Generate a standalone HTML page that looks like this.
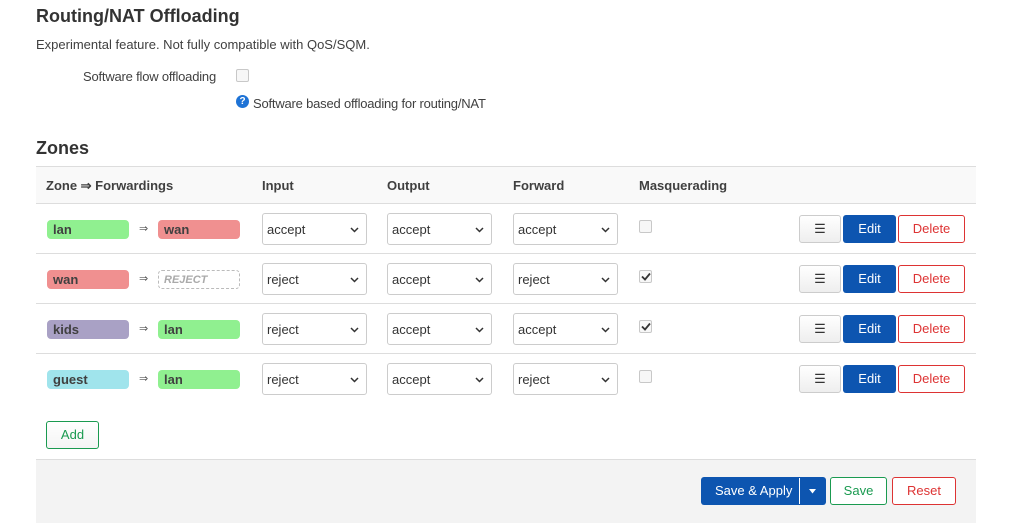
<!DOCTYPE html>
<html><head><meta charset="utf-8"><style>
*{box-sizing:border-box;margin:0;padding:0}
body{width:1025px;height:527px;background:#fff;font-family:"Liberation Sans",Arial,sans-serif;color:#404040;position:relative;overflow:hidden;font-size:13px}
.a{position:absolute}
h2{position:absolute;font-size:18px;font-weight:bold;color:#333}
.cb{position:absolute;width:13px;height:13px;border:1px solid #c8c8c8;border-radius:2px;background:#f7f7f7}
.cb svg{position:absolute;left:1px;top:1px}
.badge{position:absolute;width:82px;height:19px;border-radius:4px;font-weight:bold;font-size:13px;color:#404040;padding-left:6px;line-height:19px}
.arr{position:absolute;font-size:11px;color:#555}
.sel{position:absolute;width:105px;height:32px;border:1px solid #ccc;border-radius:3px;background:#fff;padding-left:4px;line-height:31px;font-size:13px;color:#333}
.sel svg{position:absolute;right:7px;top:13px}
.btn{position:absolute;height:28px;border-radius:3px;text-align:center;line-height:26px;font-size:13px}
.rowline{position:absolute;left:36px;width:940px;height:1px;background:#ddd}
</style></head><body>
<h2 style="left:36px;top:6px">Routing/NAT Offloading</h2>
<div class="a" style="left:36px;top:37px">Experimental feature. Not fully compatible with QoS/SQM.</div>
<div class="a" style="left:82px;top:69px;width:134px;text-align:right;letter-spacing:-0.2px">Software flow offloading</div>
<div class="cb" style="left:236px;top:69px"></div>
<div class="a" style="left:236px;top:95px;width:13px;height:13px;border-radius:50%;background:#1e73d6;color:#fff;font-size:10px;font-weight:bold;text-align:center;line-height:13px">?</div>
<div class="a" style="left:253px;top:96px;letter-spacing:-0.2px">Software based offloading for routing/NAT</div>

<h2 style="left:36px;top:138px">Zones</h2>
<div class="a" style="left:36px;top:166px;width:940px;height:38px;background:#f9f9f9;border-top:1px solid #ddd;border-bottom:1px solid #ddd"></div>
<div class="a" style="left:46px;top:178px;font-weight:bold">Zone ⇒ Forwardings</div>
<div class="a" style="left:262px;top:178px;font-weight:bold">Input</div>
<div class="a" style="left:387px;top:178px;font-weight:bold">Output</div>
<div class="a" style="left:513px;top:178px;font-weight:bold">Forward</div>
<div class="a" style="left:639px;top:178px;font-weight:bold">Masquerading</div>
<div class="rowline" style="top:253px"></div>
<div class="rowline" style="top:303px"></div>
<div class="rowline" style="top:353px"></div>

<div class="badge" style="left:47px;top:220px;background:#90f090">lan</div>
<div class="arr" style="left:139px;top:222px">⇒</div>
<div class="badge" style="left:158px;top:220px;background:#f09090">wan</div>

<div class="badge" style="left:47px;top:270px;background:#f09090">wan</div>
<div class="arr" style="left:139px;top:272px">⇒</div>
<div class="badge" style="left:158px;top:270px;border:1px dashed #bbb;color:#aaa;font-style:italic;font-size:11px;padding-left:5px;line-height:18px">REJECT</div>

<div class="badge" style="left:47px;top:320px;background:#a9a1c5">kids</div>
<div class="arr" style="left:139px;top:322px">⇒</div>
<div class="badge" style="left:158px;top:320px;background:#90f090">lan</div>

<div class="badge" style="left:47px;top:370px;background:#a0e4ec">guest</div>
<div class="arr" style="left:139px;top:372px">⇒</div>
<div class="badge" style="left:158px;top:370px;background:#90f090">lan</div>

<div class="sel" style="left:262px;top:213px">accept<svg width="9" height="6"><path d="M1 1l3.5 3.5L8 1" stroke="#333" stroke-width="1.5" fill="none"/></svg></div>
<div class="sel" style="left:387px;top:213px">accept<svg width="9" height="6"><path d="M1 1l3.5 3.5L8 1" stroke="#333" stroke-width="1.5" fill="none"/></svg></div>
<div class="sel" style="left:513px;top:213px">accept<svg width="9" height="6"><path d="M1 1l3.5 3.5L8 1" stroke="#333" stroke-width="1.5" fill="none"/></svg></div>

<div class="sel" style="left:262px;top:263px">reject<svg width="9" height="6"><path d="M1 1l3.5 3.5L8 1" stroke="#333" stroke-width="1.5" fill="none"/></svg></div>
<div class="sel" style="left:387px;top:263px">accept<svg width="9" height="6"><path d="M1 1l3.5 3.5L8 1" stroke="#333" stroke-width="1.5" fill="none"/></svg></div>
<div class="sel" style="left:513px;top:263px">reject<svg width="9" height="6"><path d="M1 1l3.5 3.5L8 1" stroke="#333" stroke-width="1.5" fill="none"/></svg></div>

<div class="sel" style="left:262px;top:313px">reject<svg width="9" height="6"><path d="M1 1l3.5 3.5L8 1" stroke="#333" stroke-width="1.5" fill="none"/></svg></div>
<div class="sel" style="left:387px;top:313px">accept<svg width="9" height="6"><path d="M1 1l3.5 3.5L8 1" stroke="#333" stroke-width="1.5" fill="none"/></svg></div>
<div class="sel" style="left:513px;top:313px">accept<svg width="9" height="6"><path d="M1 1l3.5 3.5L8 1" stroke="#333" stroke-width="1.5" fill="none"/></svg></div>

<div class="sel" style="left:262px;top:363px">reject<svg width="9" height="6"><path d="M1 1l3.5 3.5L8 1" stroke="#333" stroke-width="1.5" fill="none"/></svg></div>
<div class="sel" style="left:387px;top:363px">accept<svg width="9" height="6"><path d="M1 1l3.5 3.5L8 1" stroke="#333" stroke-width="1.5" fill="none"/></svg></div>
<div class="sel" style="left:513px;top:363px">reject<svg width="9" height="6"><path d="M1 1l3.5 3.5L8 1" stroke="#333" stroke-width="1.5" fill="none"/></svg></div>

<div class="cb" style="left:639px;top:220px"></div>
<div class="cb" style="left:639px;top:270px"><svg width="10" height="9"><path d="M1 4.5l3 3L9 1.5" stroke="#333" stroke-width="1.8" fill="none"/></svg></div>
<div class="cb" style="left:639px;top:320px"><svg width="10" height="9"><path d="M1 4.5l3 3L9 1.5" stroke="#333" stroke-width="1.8" fill="none"/></svg></div>
<div class="cb" style="left:639px;top:370px"></div>

<div class="btn" style="left:799px;top:215px;width:42px;border:1px solid #ccc;background:linear-gradient(#fff,#eee);color:#333">☰</div>
<div class="btn" style="left:843px;top:215px;width:53px;background:#0d55b0;color:#fff;line-height:28px">Edit</div>
<div class="btn" style="left:898px;top:215px;width:67px;border:1px solid #d33;color:#d33;background:#fff">Delete</div>
<div class="btn" style="left:799px;top:265px;width:42px;border:1px solid #ccc;background:linear-gradient(#fff,#eee);color:#333">☰</div>
<div class="btn" style="left:843px;top:265px;width:53px;background:#0d55b0;color:#fff;line-height:28px">Edit</div>
<div class="btn" style="left:898px;top:265px;width:67px;border:1px solid #d33;color:#d33;background:#fff">Delete</div>
<div class="btn" style="left:799px;top:315px;width:42px;border:1px solid #ccc;background:linear-gradient(#fff,#eee);color:#333">☰</div>
<div class="btn" style="left:843px;top:315px;width:53px;background:#0d55b0;color:#fff;line-height:28px">Edit</div>
<div class="btn" style="left:898px;top:315px;width:67px;border:1px solid #d33;color:#d33;background:#fff">Delete</div>
<div class="btn" style="left:799px;top:365px;width:42px;border:1px solid #ccc;background:linear-gradient(#fff,#eee);color:#333">☰</div>
<div class="btn" style="left:843px;top:365px;width:53px;background:#0d55b0;color:#fff;line-height:28px">Edit</div>
<div class="btn" style="left:898px;top:365px;width:67px;border:1px solid #d33;color:#d33;background:#fff">Delete</div>

<div class="btn" style="left:46px;top:421px;width:53px;border:1px solid #1a9a50;color:#1a9a50;background:linear-gradient(#fff,#f4f4f4)">Add</div>

<div class="a" style="left:36px;top:459px;width:940px;height:64px;background:#f3f3f3;border-top:1px solid #ddd"></div>
<div class="btn" style="left:701px;top:477px;width:125px;background:#0d55b0;color:#fff;line-height:28px;text-align:left;padding-left:14px">Save &amp; Apply</div>
<div class="a" style="left:799px;top:478px;width:1px;height:26px;background:#fff"></div>
<svg class="a" style="left:809px;top:489px" width="7" height="5"><path d="M0 0h7L3.5 4.5z" fill="#fff"/></svg>
<div class="btn" style="left:830px;top:477px;width:57px;border:1px solid #1a9a50;color:#1a9a50;background:#fff">Save</div>
<div class="btn" style="left:892px;top:477px;width:64px;border:1px solid #d33;color:#d33;background:#fff">Reset</div>
</body></html>
